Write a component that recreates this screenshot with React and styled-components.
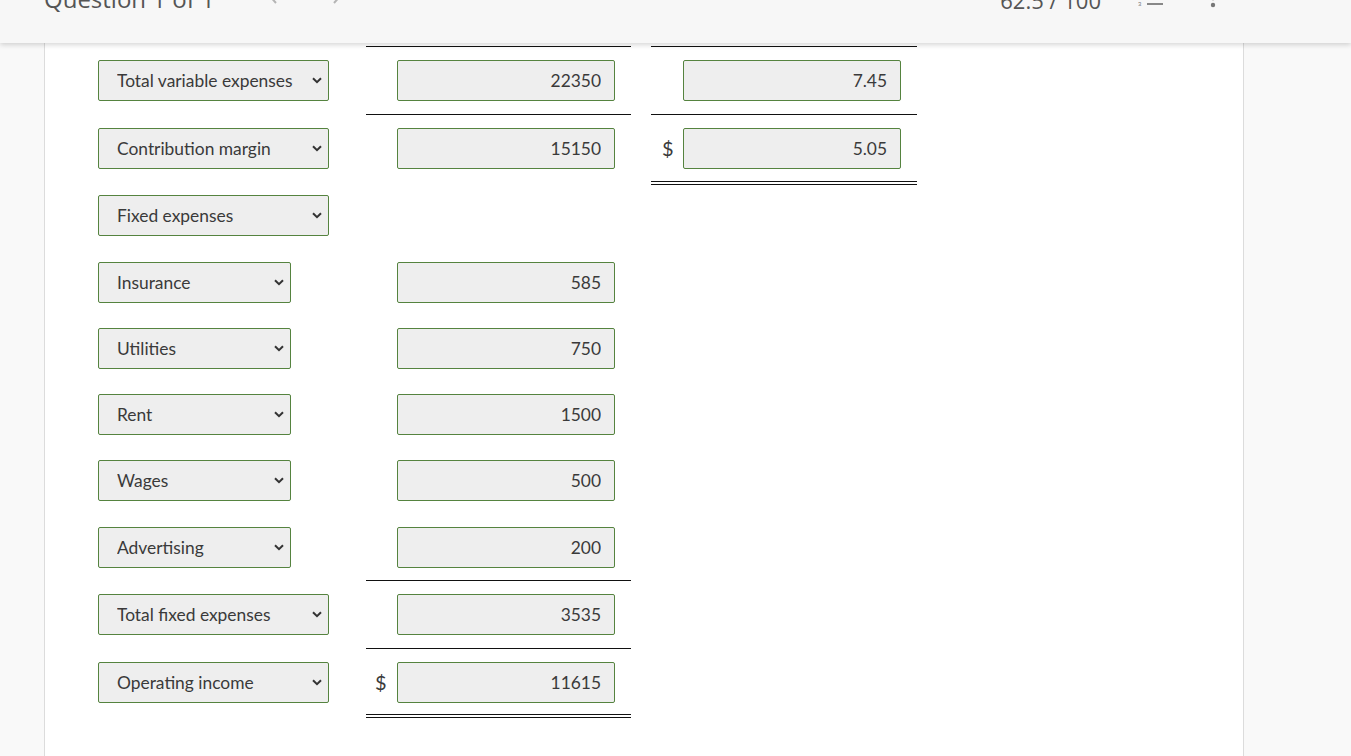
import React from "react";
import styled, { createGlobalStyle } from "styled-components";

const GlobalStyle = createGlobalStyle`
  html, body {
    margin: 0;
    padding: 0;
    background: #f9f9f9;
    height: 756px;
    overflow: hidden;
    font-family: Lato, "Open Sans", "Liberation Sans", sans-serif;
  }
  * { box-sizing: border-box; }
`;

const Page = styled.div`
  width: 1351px;
  height: 756px;
  display: flex;
  flex-direction: column;
`;

const Header = styled.header`
  position: relative;
  z-index: 2;
  height: 43px;
  flex: 0 0 43px;
  background: #f7f7f7;
  box-shadow: 0 2px 5px rgba(0, 0, 0, 0.16);
  overflow: hidden;
`;

const HeaderRow = styled.div`
  display: flex;
  align-items: flex-start;
  margin-top: -13px;
  padding-left: 44px;
  height: 40px;
`;

const Title = styled.div`
  font-family: "Open Sans", sans-serif;
  font-size: 24px;
  line-height: 24px;
  color: #555;
  width: 222px;
`;

const NavGroup = styled.div`
  display: flex;
  gap: 54px;
  margin-top: -3px;
`;

const Spacer = styled.div`
  flex: 1;
`;

const Score = styled.div`
  font-family: "Open Sans", sans-serif;
  font-size: 22px;
  line-height: 24px;
  color: #555;
  margin-top: 1px;
`;

const IconSlot = styled.div`
  display: flex;
  margin-left: ${(p) => p.$ml}px;
`;

const Panel = styled.main`
  margin-left: 44px;
  width: 1200px;
  flex: 1;
  background: #fff;
  border-left: 1px solid #dcdcdc;
  border-right: 1px solid #dcdcdc;
  padding: 3px 0 0 53px;
`;

const Row = styled.div`
  display: grid;
  grid-template-columns: 248px 265px 266px;
  column-gap: 20px;
  height: ${(p) => p.$h}px;
`;

const LabelCell = styled.div`
  padding-top: 14px;
`;

const ruleWidth = (r) => (r === "double" ? 4 : 1);
const ruleStyle = (r) =>
  r === "double" ? "4px double #111" : r === "single" ? "1px solid #111" : "1px solid transparent";

const AmountCell = styled.div`
  display: flex;
  align-items: flex-start;
  padding-top: ${(p) => 14 - ruleWidth(p.$top)}px;
  padding-right: 16px;
  border-top: ${(p) => ruleStyle(p.$top)};
  border-bottom: ${(p) => (p.$bottom ? ruleStyle(p.$bottom) : "none")};
`;

const Dollar = styled.span`
  width: ${(p) => p.$w}px;
  padding-left: ${(p) => p.$pl}px;
  font-size: 20px;
  line-height: 41px;
  color: #3a3a3a;
  flex: 0 0 auto;
`;

const SelectWrap = styled.div`
  position: relative;
  width: ${(p) => p.$w}px;
  height: 41px;
`;

const Select = styled.select`
  appearance: none;
  -webkit-appearance: none;
  width: 100%;
  height: 41px;
  margin: 0;
  padding: 0 30px 0 18px;
  background: #eeeeee;
  border: 1px solid #55833f;
  border-radius: 2px;
  font-family: Lato, "Open Sans", sans-serif;
  font-size: 17.4px;
  color: #3a3a3a;
  outline: none;
`;

const Chevron = styled.svg`
  position: absolute;
  right: 7px;
  top: 17px;
  pointer-events: none;
`;

const Input = styled.input`
  width: 218px;
  height: 41px;
  margin: 0 0 0 auto;
  padding: 0 13px 0 8px;
  background: #eeeeee;
  border: 1px solid #55833f;
  border-radius: 2px;
  text-align: right;
  font-family: Lato, "Open Sans", sans-serif;
  font-size: 17.4px;
  color: #3a3a3a;
  outline: none;
`;

const ChevronDown = () => (
  <Chevron width="10" height="7" viewBox="0 0 10 7">
    <path d="M1 1.2 L5 5.2 L9 1.2" fill="none" stroke="#333" strokeWidth="2" />
  </Chevron>
);

const LabelSelect = ({ label, wide }) => (
  <SelectWrap $w={wide ? 231 : 193}>
    <Select defaultValue={label}>
      <option value={label}>{label}</option>
    </Select>
    <ChevronDown />
  </SelectWrap>
);

const Amount = ({ value, dollar, top, bottom, col }) => (
  <AmountCell $top={top} $bottom={bottom}>
    {dollar ? (
      <Dollar $w={col === 2 ? 32 : 31} $pl={col === 2 ? 11 : 9}>
        $
      </Dollar>
    ) : null}
    {value !== undefined ? <Input readOnly value={value} /> : null}
  </AmountCell>
);

const rows = [
  { h: 68, label: "Total variable expenses", wide: true, c1: { value: "22350", top: "single" }, c2: { value: "7.45", top: "single" } },
  { h: 67, label: "Contribution margin", wide: true, c1: { value: "15150", top: "single" }, c2: { value: "5.05", dollar: true, top: "single" } },
  { h: 67, label: "Fixed expenses", wide: true, c1: {}, c2: { top: "double" } },
  { h: 66, label: "Insurance", c1: { value: "585" }, c2: {} },
  { h: 66, label: "Utilities", c1: { value: "750" }, c2: {} },
  { h: 66, label: "Rent", c1: { value: "1500" }, c2: {} },
  { h: 67, label: "Wages", c1: { value: "500" }, c2: {} },
  { h: 67, label: "Advertising", c1: { value: "200" }, c2: {} },
  { h: 68, label: "Total fixed expenses", wide: true, c1: { value: "3535", top: "single" }, c2: {} },
  { h: 70, label: "Operating income", wide: true, c1: { value: "11615", dollar: true, top: "single", bottom: "double" }, c2: {} },
];

const NavArrow = ({ dir }) => (
  <svg width="12" height="20" viewBox="0 0 12 20">
    <path
      d={dir === "left" ? "M10 1 L2 10 L10 19" : "M2 1 L10 10 L2 19"}
      fill="none"
      stroke="#b5b5b5"
      strokeWidth="2"
    />
  </svg>
);

const ListIcon = () => (
  <svg width="26" height="24" viewBox="0 0 26 24">
    <rect x="9" y="16" width="16" height="2" fill="#888" />
    <rect x="9" y="9" width="16" height="2" fill="#888" />
    <text x="0" y="19" fontSize="6" fontFamily="Liberation Sans, sans-serif" fill="#777">3</text>
  </svg>
);

const Kebab = () => (
  <svg width="6" height="24" viewBox="0 0 6 24">
    <circle cx="3" cy="4" r="2.2" fill="#777" />
    <circle cx="3" cy="11" r="2.2" fill="#777" />
    <circle cx="3" cy="18" r="2.2" fill="#777" />
  </svg>
);

export default function App() {
  return (
    <>
      <GlobalStyle />
      <Page>
        <Header>
          <HeaderRow>
            <Title>Question 1 of 1</Title>
            <NavGroup>
              <NavArrow dir="left" />
              <NavArrow dir="right" />
            </NavGroup>
            <Spacer />
            <Score>62.5 / 100</Score>
            <IconSlot $ml={37}>
              <ListIcon />
            </IconSlot>
            <IconSlot $ml={46}>
              <Kebab />
            </IconSlot>
            <IconSlot $ml={135} />
          </HeaderRow>
        </Header>
        <Panel>
          {rows.map((r) => (
            <Row key={r.label} $h={r.h}>
              <LabelCell>
                <LabelSelect label={r.label} wide={r.wide} />
              </LabelCell>
              <Amount col={1} {...r.c1} />
              <Amount col={2} {...r.c2} />
            </Row>
          ))}
        </Panel>
      </Page>
    </>
  );
}
